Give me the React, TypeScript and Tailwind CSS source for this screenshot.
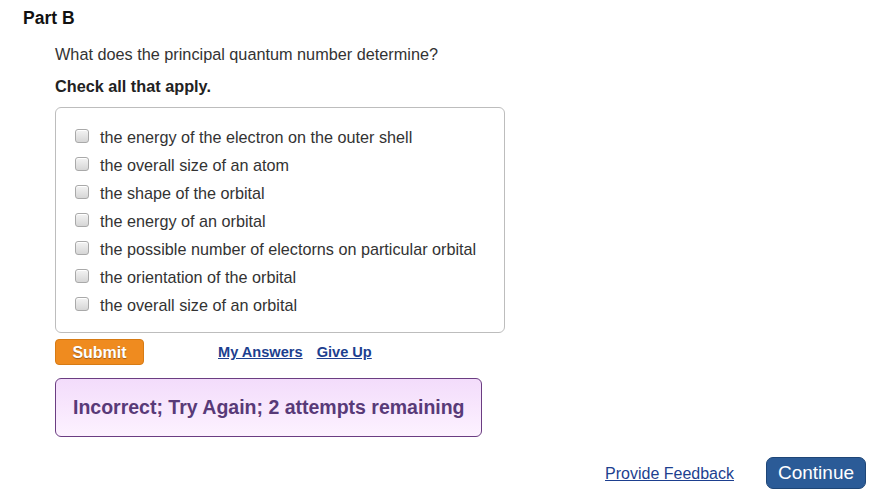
import React from "react";

const options = [
  "the energy of the electron on the outer shell",
  "the overall size of an atom",
  "the shape of the orbital",
  "the energy of an orbital",
  "the possible number of electorns on particular orbital",
  "the orientation of the orbital",
  "the overall size of an orbital",
];

const Checkbox = () => (
  <span className="inline-block w-[14px] h-[14px] -mt-[3px] rounded-[3px] border border-[#a9a9a9] bg-gradient-to-b from-[#f4f4f4] to-[#d6d6d6] shadow-[inset_0_1px_0_#fff]" />
);

export default function App() {
  return (
    <div
      className="w-[877px] h-[500px] bg-white text-[#333] overflow-hidden"
      style={{ fontFamily: '"Liberation Sans", Arial, sans-serif' }}
    >
      <div className="pl-[23px] pt-[8px]">
        <h2 className="text-[17.5px] font-bold text-[#111] leading-[20px]">Part B</h2>
      </div>
      <div className="pl-[55px]">
        <p className="mt-[16px] text-[16.25px] leading-[20px]">
          What does the principal quantum number determine?
        </p>
        <p className="mt-[12px] text-[16.25px] font-bold leading-[20px] text-[#222]">
          Check all that apply.
        </p>
        <div className="mt-[11px] w-[450px] h-[226px] border border-[#bdbdbd] rounded-[6px] pt-[15px] pl-[19px]">
          <ul className="flex flex-col">
            {options.map((o) => (
              <li key={o} className="flex items-center h-[28px]">
                <Checkbox />
                <span className="ml-[11px] text-[16.2px] text-[#333]">{o}</span>
              </li>
            ))}
          </ul>
        </div>
        <div className="mt-[6px] flex items-center">
          <button className="w-[89px] h-[26px] rounded-[4px] bg-[#ef8b1f] border border-[#d77b14] text-white font-bold text-[16px] leading-[24px] pt-[1px] [text-shadow:0_1px_1px_rgba(0,0,0,0.35)]">
            Submit
          </button>
          <a href="#" className="ml-[74px] mt-[2px] text-[14.6px] font-bold text-[#1d3f8f] underline">
            My Answers
          </a>
          <a href="#" className="ml-[14px] mt-[2px] text-[14.6px] font-bold text-[#1d3f8f] underline">
            Give Up
          </a>
        </div>
        <div className="mt-[13px] w-[427px] h-[59px] rounded-[6px] border border-[#6b3d82] bg-gradient-to-b from-[#f3dcfb] to-[#fdf2ff] flex items-center pl-[17px]">
          <span className="text-[19.5px] font-bold text-[#583a78]">
            Incorrect; Try Again; 2 attempts remaining
          </span>
        </div>
      </div>
      <div className="mt-[20px] flex justify-end items-center pr-[11px]">
        <a href="#" className="mt-[2px] text-[16px] text-[#1d3f8f] underline">
          Provide Feedback
        </a>
        <button className="ml-[32px] w-[100px] h-[32px] rounded-[7px] bg-[#2b5b97] border border-[#1e4677] text-white text-[19px]">
          Continue
        </button>
      </div>
    </div>
  );
}
